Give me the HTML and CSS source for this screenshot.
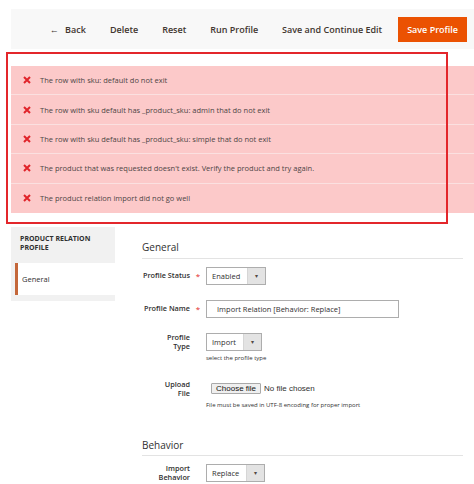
FILE: index.html
```html
<!DOCTYPE html>
<html lang="en">
<head>
    <meta charset="UTF-8">
    <meta name="viewport" content="width=device-width, initial-scale=1.0">
    <title>Product Relation Profile</title>
    <link rel="stylesheet" href="styles.css">
</head>
<body>
<div class="page-actions">
    <button class="action"><span class="arrow">&larr;</span> Back</button>
    <button class="action">Delete</button>
    <button class="action">Reset</button>
    <button class="action">Run Profile</button>
    <button class="action">Save and Continue Edit</button>
    <button class="action primary">Save Profile</button>
</div>

<!-- import errors -->
<div class="messages">
    <div class="message">
        <svg class="icon-error" viewBox="0 0 8 8"><path d="M1 1L7 7M7 1L1 7"/></svg>
        <span>The row with sku: default do not exit</span>
    </div>
    <div class="message">
        <svg class="icon-error" viewBox="0 0 8 8"><path d="M1 1L7 7M7 1L1 7"/></svg>
        <span>The row with sku default has _product_sku: admin that do not exit</span>
    </div>
    <div class="message">
        <svg class="icon-error" viewBox="0 0 8 8"><path d="M1 1L7 7M7 1L1 7"/></svg>
        <span>The row with sku default has _product_sku: simple that do not exit</span>
    </div>
    <div class="message">
        <svg class="icon-error" viewBox="0 0 8 8"><path d="M1 1L7 7M7 1L1 7"/></svg>
        <span>The product that was requested doesn't exist. Verify the product and try again.</span>
    </div>
    <div class="message">
        <svg class="icon-error" viewBox="0 0 8 8"><path d="M1 1L7 7M7 1L1 7"/></svg>
        <span>The product relation import did not go well</span>
    </div>
</div>
<div class="highlight"></div>

<div class="page-columns">
    <div class="side-col">
        <div class="nav-title">Product Relation Profile</div>
        <div class="nav-item active">General</div>
    </div>

    <div class="main-col">
        <div class="section-title">General</div>

        <div class="field first">
            <label class="field-label">Profile Status</label>
            <span class="required">*</span>
            <div class="control">
                <div class="select"><span class="value">Enabled</span><span class="toggle">&#9662;</span></div>
            </div>
        </div>

        <div class="field">
            <label class="field-label">Profile Name</label>
            <span class="required">*</span>
            <div class="control">
                <input class="text-input" type="text" value="Import Relation [Behavior: Replace]">
            </div>
        </div>

        <div class="field">
            <label class="field-label">Profile<br>Type</label>
            <span class="required"></span>
            <div class="control">
                <div class="select"><span class="value">Import</span><span class="toggle">&#9662;</span></div>
                <div class="note">select the profile type</div>
            </div>
        </div>

        <div class="field upload">
            <label class="field-label">Upload<br>File</label>
            <span class="required"></span>
            <div class="control">
                <div class="file-wrap">
                    <button class="file-button" type="button">Choose file</button>
                    <span class="file-name">No file chosen</span>
                </div>
                <div class="note">File must be saved in UTF-8 encoding for proper import</div>
            </div>
        </div>

        <div class="section-title behavior">Behavior</div>

        <div class="field first">
            <label class="field-label">Import<br>Behavior</label>
            <span class="required"></span>
            <div class="control">
                <div class="select"><span class="value">Replace</span><span class="toggle">&#9662;</span></div>
            </div>
        </div>
    </div>
</div>
</body>
</html>
```

FILE: styles.css
```css
* {
    margin: 0;
    padding: 0;
    box-sizing: border-box;
}

body {
    font-family: "Open Sans", "Liberation Sans", sans-serif;
    color: #303030;
    background: #fff;
}

/* action bar */
.page-actions {
    display: flex;
    justify-content: flex-end;
    align-items: center;
    height: 40px;
    margin: 9px 0 0 11px;
    padding-right: 7px;
    background: #f8f8f8;
}

.action {
    height: 25px;
    padding: 0 12px;
    border: none;
    background: none;
    font-family: inherit;
    font-size: 9px;
    font-weight: 600;
    color: #41362f;
}

.action .arrow {
    margin-right: 4px;
}

.action.primary {
    margin-left: 4px;
    padding: 0 9px;
    background: #eb5202;
    color: #fff;
}

/* messages */
.messages {
    margin: 17px 0 0 11px;
}

.message {
    display: flex;
    align-items: center;
    height: 29.4px;
    padding-left: 12px;
    background: #fcc9c9;
    border-bottom: 1px solid #fbe0e0;
    font-size: 7.5px;
    color: #4d4545;
}

.message:last-child {
    border-bottom: none;
}

.icon-error {
    width: 8px;
    height: 8px;
    margin-right: 9px;
    stroke: #e0242a;
    stroke-width: 2;
    fill: none;
}

.highlight {
    position: absolute;
    left: 6px;
    top: 52px;
    width: 442px;
    height: 172px;
    border: 2px solid #e3262b;
}

/* columns */
.page-columns {
    display: flex;
    align-items: flex-start;
    margin: 14px 11px 0 11px;
}

.side-col {
    width: 104px;
    padding-bottom: 6px;
    background: #f1f1f1;
}

.nav-title {
    padding: 7px 9px 11px;
    font-size: 7px;
    font-weight: 700;
    line-height: 9px;
    text-transform: uppercase;
    color: #303030;
}

.nav-item {
    height: 32px;
    margin-left: 4px;
    padding-left: 4px;
    border-left: 3px solid #c4673a;
    background: #fff;
    font-size: 7.5px;
    line-height: 32px;
}

.main-col {
    flex: 1;
    margin-left: 27px;
}

.section-title {
    padding: 13px 0 4px;
    border-bottom: 1px solid #e3e3e3;
    font-size: 10px;
    line-height: 14px;
}

.section-title.behavior {
    padding-top: 29px;
    padding-bottom: 3px;
}

/* form rows */
.field {
    display: flex;
    align-items: flex-start;
    margin-top: 15px;
}

.field.first {
    margin-top: 8px;
}

.field.upload {
    margin-top: 18px;
}

.field-label {
    display: flex;
    align-items: center;
    justify-content: flex-end;
    width: 48px;
    height: 18px;
    font-size: 7.3px;
    font-weight: 600;
    line-height: 9px;
    text-align: right;
    white-space: nowrap;
}

.required {
    width: 16px;
    height: 18px;
    line-height: 18px;
    text-align: center;
    font-size: 8px;
    color: #e22626;
}

.control {
    font-size: 7.5px;
    line-height: 9px;
}

.select {
    display: flex;
    width: max-content;
    height: 18px;
    border: 1px solid #adadad;
    background: #fff;
}

.select .value {
    padding: 0 7px 0 5px;
    line-height: 16px;
}

.select .toggle {
    width: 18px;
    border-left: 1px solid #d6d6d6;
    background: #e3e3e3;
    font-size: 6px;
    line-height: 16px;
    text-align: center;
    color: #514943;
}

.text-input {
    display: block;
    width: 193px;
    height: 18px;
    padding: 0 10px;
    border: 1px solid #adadad;
    font-family: inherit;
    font-size: 7.5px;
    color: #303030;
}

.file-wrap {
    display: flex;
    align-items: center;
    height: 18px;
    padding-left: 5px;
}

.file-button {
    height: 11px;
    padding: 0 4px;
    border: 1px solid #a9a9a9;
    border-radius: 1px;
    background: #efefef;
    font-family: "Liberation Sans", Arial, sans-serif;
    font-size: 8px;
    line-height: 9px;
    color: #111;
}

.file-name {
    margin-left: 3px;
    font-family: "Liberation Sans", Arial, sans-serif;
    font-size: 8px;
    color: #303030;
}

.note {
    margin-top: 3px;
    font-size: 6px;
    line-height: 8px;
    color: #303030;
}
```
